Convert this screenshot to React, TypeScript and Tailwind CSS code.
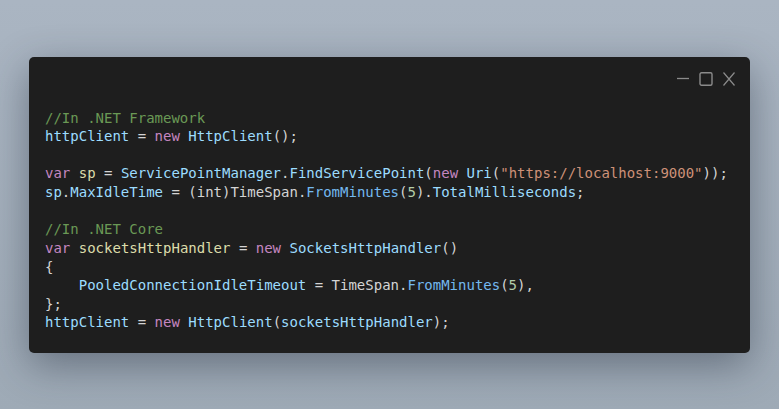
type Tok = [string, string];

const C = {
  cm: "text-[#6a9955]",
  kw: "text-[#c586c0]",
  id: "text-[#9cdcfe]",
  fn: "text-[#74b9ef]",
  dv: "text-[#dcdcaa]",
  tx: "text-[#d4d4d4]",
  nm: "text-[#b5cea8]",
  st: "text-[#ce9178]",
};

const lines: Tok[][] = [
  [["//In .NET Framework", C.cm]],
  [["httpClient", C.id], [" = ", C.tx], ["new", C.kw], [" ", C.tx], ["HttpClient", C.id], ["();", C.tx]],
  [],
  [
    ["var", C.kw], [" ", C.tx], ["sp", C.dv], [" = ", C.tx], ["ServicePointManager", C.id], [".", C.tx],
    ["FindServicePoint", C.id], ["(", C.tx], ["new", C.kw], [" ", C.tx], ["Uri", C.id], ["(", C.tx],
    ['"https://localhost:9000"', C.st], ["));", C.tx],
  ],
  [
    ["sp", C.id], [".", C.tx], ["MaxIdleTime", C.id], [" = (int)TimeSpan.", C.tx], ["FromMinutes", C.fn],
    ["(", C.tx], ["5", C.nm], [").", C.tx], ["TotalMilliseconds", C.id], [";", C.tx],
  ],
  [],
  [["//In .NET Core", C.cm]],
  [
    ["var", C.kw], [" ", C.tx], ["socketsHttpHandler", C.dv], [" = ", C.tx], ["new", C.kw], [" ", C.tx],
    ["SocketsHttpHandler", C.id], ["()", C.tx],
  ],
  [["{", C.tx]],
  [
    ["    ", C.tx], ["PooledConnectionIdleTimeout", C.id], [" = TimeSpan.", C.tx], ["FromMinutes", C.fn],
    ["(", C.tx], ["5", C.nm], ["),", C.tx],
  ],
  [["};", C.tx]],
  [
    ["httpClient", C.id], [" = ", C.tx], ["new", C.kw], [" ", C.tx], ["HttpClient", C.id], ["(", C.tx],
    ["socketsHttpHandler", C.id], [");", C.tx],
  ],
];

export default function App() {
  return (
    <div className="flex h-[409px] w-full items-center justify-center bg-gradient-to-b from-[#aab5c2] to-[#9eaab6]">
      <div className="w-[721px] h-[296px] rounded-[5px] bg-[#1e1e1e] shadow-[0_12px_40px_rgba(30,40,55,0.45)]">
        <div className="flex h-[44px] items-center justify-end gap-[10px] pr-[15px] text-[#8b8b8b]">
          <svg width="12" height="13" viewBox="0 0 12 13">
            <line x1="0" y1="6.5" x2="12" y2="6.5" stroke="currentColor" strokeWidth="1.3" />
          </svg>
          <svg width="14" height="14" viewBox="0 0 14 14">
            <rect x="1" y="0.8" width="12" height="12.4" rx="1.5" fill="none" stroke="currentColor" strokeWidth="1.4" />
          </svg>
          <svg width="12" height="14" viewBox="0 0 12 14">
            <path d="M0.5 0.5 L11.5 13.5 M11.5 0.5 L0.5 13.5" stroke="currentColor" strokeWidth="1.2" fill="none" />
          </svg>
        </div>
        <pre className="pl-[16px] pt-[8px] font-['DejaVu_Sans_Mono',monospace] text-[14px] leading-[18.64px]">
          {lines.map((line, i) => (
            <div key={i} className="h-[18.64px] whitespace-pre">
              {line.map(([t, c], j) => (
                <span key={j} className={c}>{t}</span>
              ))}
            </div>
          ))}
        </pre>
      </div>
    </div>
  );
}
